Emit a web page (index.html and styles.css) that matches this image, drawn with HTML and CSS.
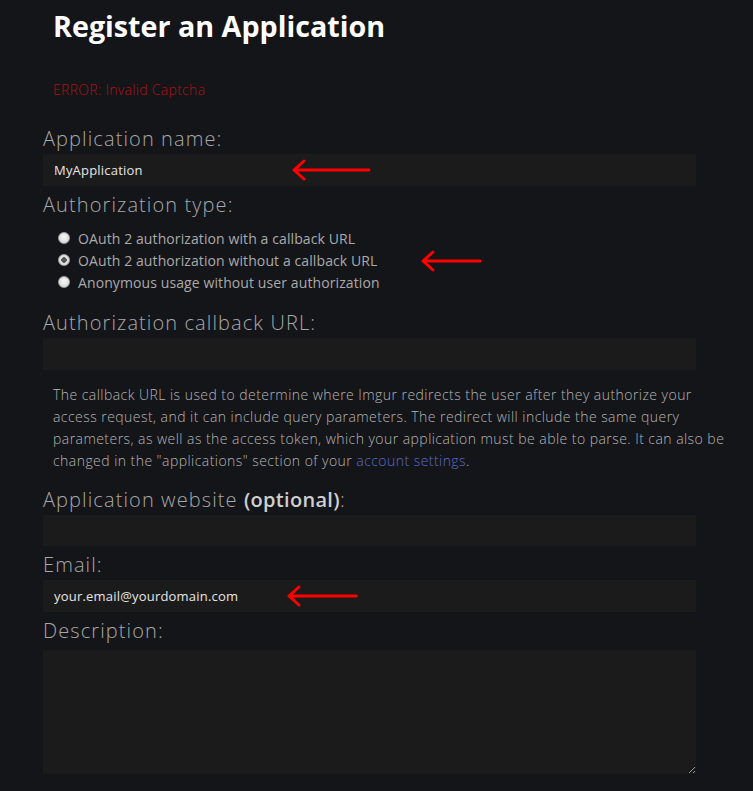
FILE: index.html
```html
<!DOCTYPE html>
<html>
<head>
<meta charset="utf-8">
<link rel="stylesheet" href="styles.css">
</head>
<body>
<div class="page">
  <h1 class="title">Register an Application</h1>
  <p class="error">ERROR: Invalid Captcha</p>
  <form class="form">
    <div class="field">
      <label class="label">Application name:</label>
      <div class="input-wrap">
        <input class="input" type="text" value="MyApplication">
        <svg class="arrow arrow-1" width="80" height="22" viewBox="0 0 80 22"><path d="M78 11H3M13 2L3 11L13 20" fill="none" stroke="#ff0000" stroke-width="3" stroke-linecap="round" stroke-linejoin="round"/></svg>
      </div>
    </div>
    <div class="field">
      <label class="label">Authorization type:</label>
      <div class="radios">
        <label class="radio"><span class="dot"></span>OAuth 2 authorization with a callback URL</label>
        <label class="radio"><span class="dot dot-on"></span>OAuth 2 authorization without a callback URL
          <svg class="arrow arrow-2" width="62" height="22" viewBox="0 0 62 22"><path d="M60 11H3M13 2L3 11L13 20" fill="none" stroke="#ff0000" stroke-width="3" stroke-linecap="round" stroke-linejoin="round"/></svg>
        </label>
        <label class="radio"><span class="dot"></span>Anonymous usage without user authorization</label>
      </div>
    </div>
    <div class="field">
      <label class="label">Authorization callback URL:</label>
      <input class="input" type="text" value="">
      <p class="help">The callback URL is used to determine where Imgur redirects the user after they authorize your access request, and it can include query parameters. The redirect will include the same query parameters, as well as the access token, which your application must be able to parse. It can also be changed in the "applications" section of your <a class="link" href="#">account settings</a>.</p>
    </div>
    <div class="field">
      <label class="label">Application website <b class="opt">(optional)</b>:</label>
      <input class="input input-short" type="text" value="">
    </div>
    <div class="field">
      <label class="label">Email:</label>
      <div class="input-wrap">
        <input class="input" type="text" value="your.email@yourdomain.com">
        <svg class="arrow arrow-3" width="72" height="22" viewBox="0 0 72 22"><path d="M70 11H3M13 2L3 11L13 20" fill="none" stroke="#ff0000" stroke-width="3" stroke-linecap="round" stroke-linejoin="round"/></svg>
      </div>
    </div>
    <div class="field">
      <label class="label">Description:</label>
      <textarea class="textarea"></textarea>
    </div>
  </form>
</div>
</body>
</html>
```

FILE: styles.css
```css
html, body {
  margin: 0;
  padding: 0;
  background: #141519;
}
body {
  font-family: "Open Sans", "DejaVu Sans", sans-serif;
  color: #b4b4b4;
}
.page {
  width: 653px;
  padding: 0 0 0 43px;
}
.title {
  margin: 0;
  padding: 6px 0 0 10px;
  font-size: 28.7px;
  line-height: 40px;
  font-weight: 700;
  color: #ffffff;
}
.error {
  margin: 34px 0 0 10px;
  font-size: 14px;
  line-height: 20px;
  font-weight: 300;
  letter-spacing: 0.3px;
  color: #b01212;
}
.form {
  margin-top: 24px;
}
.field {
  display: flex;
  flex-direction: column;
}
.label {
  display: block;
  font-size: 20px;
  line-height: 30px;
  font-weight: 300;
  color: #a8a8a8;
  letter-spacing: 1.1px;
}
.opt {
  font-weight: 600;
  color: #cfcfcf;
  letter-spacing: 0.3px;
}
.input-wrap {
  position: relative;
}
.input {
  display: block;
  box-sizing: border-box;
  width: 653px;
  height: 32px;
  margin: 0 0 4px;
  padding: 0 11px;
  border: 0;
  outline: 0;
  background: #1b1b1b;
  color: #e6e6e6;
  font-family: "Open Sans", "DejaVu Sans", sans-serif;
  font-size: 13px;
  letter-spacing: 0.2px;
}
.input-short {
  height: 31px;
}
.textarea {
  display: block;
  box-sizing: border-box;
  width: 653px;
  height: 124px;
  margin: 4px 0 0;
  border: 0;
  outline: 0;
  background: #1b1b1b;
  resize: vertical;
}
.arrow {
  position: absolute;
}
.arrow-1 { left: 248px; top: 5px; }
.arrow-3 { left: 243px; top: 5px; }
.radios {
  display: flex;
  flex-direction: column;
  padding: 7px 0 15px 15px;
}
.radio {
  position: relative;
  display: flex;
  align-items: center;
  height: 22px;
  font-size: 14px;
  font-weight: 400;
  color: #aaaaaa;
  letter-spacing: 0.1px;
}
.arrow-2 { left: 362px; top: 1px; }
.dot {
  width: 12px;
  height: 12px;
  margin-right: 8px;
  border-radius: 50%;
  background: radial-gradient(circle at 50% 40%, #f6f6f6, #d2d2d2);
  box-sizing: border-box;
  border: 1px solid #a0a0a0;
}
.dot-on {
  background: radial-gradient(circle, #555 0 2.5px, #e0e0e0 3px);
}
.help {
  width: 675px;
  margin: 10px 0 13px 10px;
  font-size: 14px;
  line-height: 22px;
  font-weight: 300;
  color: #b4b4b4;
  letter-spacing: 0.45px;
}
.link {
  color: #5c6bc8;
  text-decoration: none;
}
```
